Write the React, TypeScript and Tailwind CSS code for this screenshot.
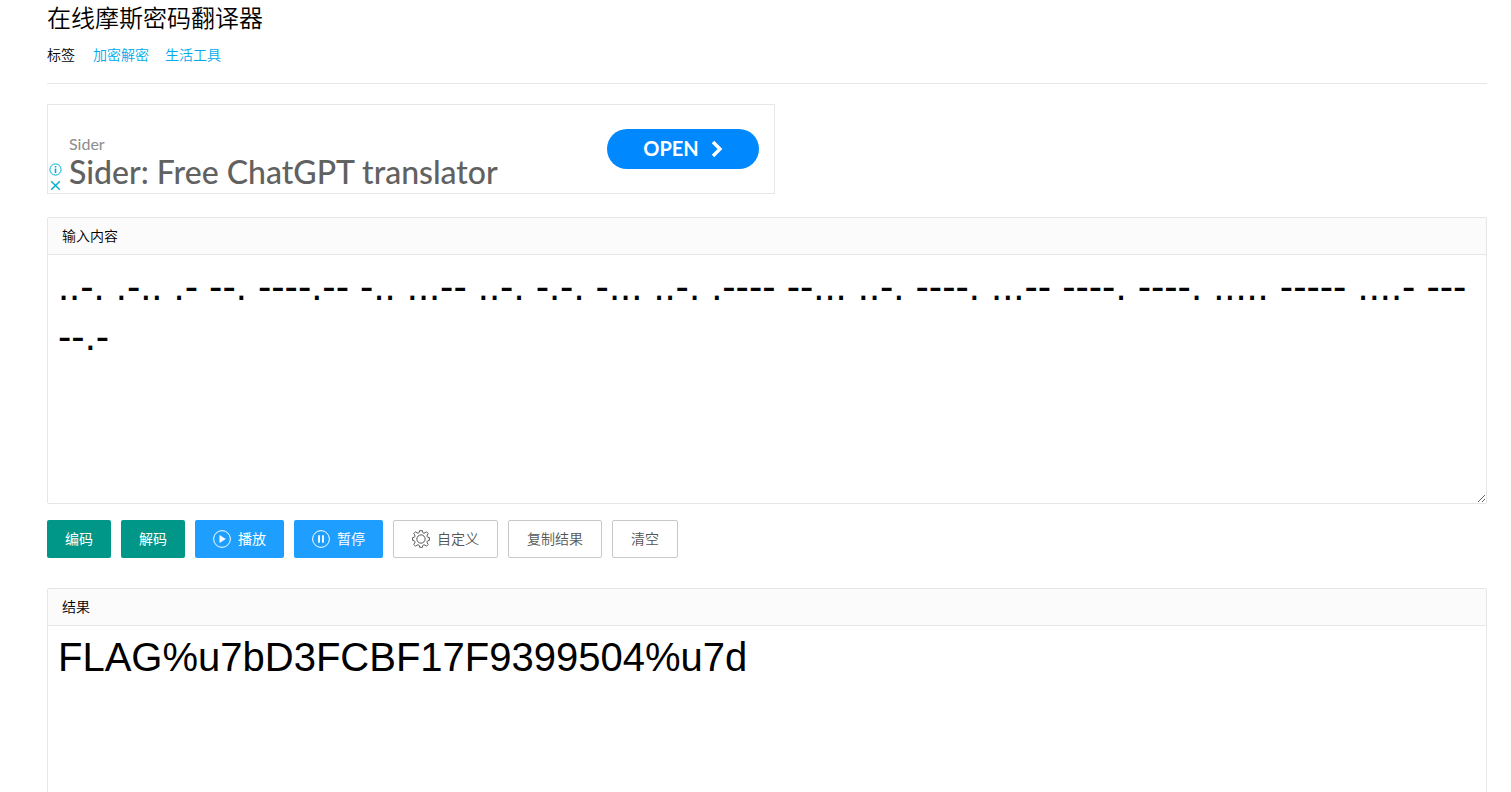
import { ReactNode, useState } from "react";

const MORSE =
  "..-. .-.. .- --. ----.-- -.. ...-- ..-. -.-. -... ..-. .---- --... ..-. ----. ...-- ----. ----. ..... ----- ....- -----.-";

const PlayIcon = () => (
  <svg viewBox="0 0 20 20" className="size-[18px]" fill="none">
    <circle cx="10" cy="10" r="9.3" stroke="currentColor" strokeWidth="1.1" />
    <path d="M7.2 5.6v8.8l7-4.4z" fill="currentColor" />
  </svg>
);

const PauseIcon = () => (
  <svg viewBox="0 0 20 20" className="size-[18px]" fill="none">
    <circle cx="10" cy="10" r="9.3" stroke="currentColor" strokeWidth="1.1" />
    <path d="M7.8 5.8v8.4M12.2 5.8v8.4" stroke="currentColor" strokeWidth="2" />
  </svg>
);

const GearIcon = () => (
  <svg
    viewBox="0 0 20 20"
    className="size-[18px]"
    fill="none"
    stroke="currentColor"
    strokeWidth="1.1"
    strokeLinejoin="round"
  >
    <circle cx="10" cy="10" r="4.6" />
    <path d="M8.4 .8h3.2l.3 1.9q1.2 1.4 2.6.5l1.6-1.2 2 2-1.2 1.6q-.8 1.4.6 2.5l1.8.3v3.2l-1.8.3q-1.4 1.1-.6 2.5l1.2 1.6-2 2-1.6-1.2q-1.4-.9-2.6.5l-.3 1.9H8.4l-.3-1.9q-1.2-1.4-2.6-.5L3.9 18l-2-2 1.2-1.6q.8-1.4-.6-2.5l-1.8-.3V8.4l1.8-.3q1.4-1.1.6-2.5L1.9 4l2-2 1.6 1.2q1.4.9 2.6-.5z" />
  </svg>
);

type ActionButtonProps = {
  variant: "primary" | "normal" | "outline";
  icon?: ReactNode;
  onClick?: () => void;
  children: ReactNode;
};

const variants = {
  primary: "bg-[#009688] font-normal text-white",
  normal: "bg-[#1e9fff] font-normal text-white",
  outline: "border border-[#c9c9c9] bg-white text-[#555]",
};

const ActionButton = ({
  variant,
  icon,
  onClick,
  children,
}: ActionButtonProps) => {
  return (
    <button
      type="button"
      onClick={onClick}
      className={`flex h-[38px] items-center gap-[7px] rounded-xs px-[18px] text-sm hover:opacity-80 ${variants[variant]}`}
    >
      {icon}
      {children}
    </button>
  );
};

const AdBanner = () => {
  return (
    <aside className="mt-5 flex h-[90px] w-full max-w-[728px] border border-[#e6e6e6] pr-[15px] pl-px">
      <div className="flex flex-col justify-end gap-[3px] pb-px text-[#00aecd]">
        <svg viewBox="0 0 13 13" className="size-[13px]" fill="none">
          <circle cx="6.5" cy="6.5" r="5.6" stroke="currentColor" />
          <path
            d="M6.5 3v1.5M6.5 5.5v4.5"
            stroke="currentColor"
            strokeWidth="1.6"
          />
        </svg>
        <svg viewBox="0 0 13 13" className="size-[13px]" fill="none">
          <path
            d="M2.2 2.2l8.6 8.6M10.8 2.2l-8.6 8.6"
            stroke="currentColor"
            strokeWidth="1.4"
          />
        </svg>
      </div>
      <div className="flex flex-1 flex-col justify-end pb-[3px] pl-[7px] font-['Lato',sans-serif]">
        <span className="text-base leading-5 font-normal text-[#8c8c8c]">
          Sider
        </span>
        <span className="text-[32px] leading-9 font-medium text-[#616161]">
          Sider: Free ChatGPT translator
        </span>
      </div>
      <a
        href="#open"
        className="mt-6 flex h-10 w-[152px] items-center justify-center gap-3 rounded-full bg-[#0088ff] pb-0.5 font-['Lato',sans-serif] text-xl font-bold text-white"
      >
        OPEN
        <svg viewBox="0 0 12 18" className="h-[18px] w-3" fill="none">
          <path d="M2 3l7 7-7 7" stroke="currentColor" strokeWidth="3.4" />
        </svg>
      </a>
    </aside>
  );
};

const App = () => {
  const [input, setInput] = useState(MORSE);
  const [result, setResult] = useState("FLAG%u7bD3FCBF17F9399504%u7d");

  const clear = () => {
    setInput("");
    setResult("");
  };

  return (
    <main className="bg-white pr-6 pl-[47px] font-['Liberation_Sans','Noto_Sans_CJK_SC',sans-serif] text-sm font-[350] text-black">
      <header className="border-b border-[#e6e6e6] pt-px pb-[17px]">
        <h1 className="text-2xl leading-9 font-[350]">在线摩斯密码翻译器</h1>
        <div className="mt-[7px] flex gap-4 leading-[22px]">
          <span className="mr-0.5">标签</span>
          <a href="#crypto" className="text-[#01aaed]">
            加密解密
          </a>
          <a href="#life" className="text-[#01aaed]">
            生活工具
          </a>
        </div>
      </header>

      <AdBanner />

      <section className="mt-[23px]">
        <label
          htmlFor="source"
          className="block rounded-t-xs border border-b-0 border-[#e6e6e6] bg-[#fbfbfb] px-3.5 leading-9"
        >
          输入内容
        </label>
        <textarea
          id="source"
          value={input}
          onChange={(e) => setInput(e.target.value)}
          className="block h-[250px] w-full resize-y rounded-b-xs border border-[#e6e6e6] px-2.5 py-1.5 text-[40px] leading-[50px] break-all outline-none"
        />
      </section>

      <div className="mt-4 flex flex-wrap gap-2.5">
        <ActionButton variant="primary">编码</ActionButton>
        <ActionButton variant="primary">解码</ActionButton>
        <ActionButton variant="normal" icon={<PlayIcon />}>
          播放
        </ActionButton>
        <ActionButton variant="normal" icon={<PauseIcon />}>
          暂停
        </ActionButton>
        <ActionButton variant="outline" icon={<GearIcon />}>
          自定义
        </ActionButton>
        <ActionButton
          variant="outline"
          onClick={() => navigator.clipboard.writeText(result)}
        >
          复制结果
        </ActionButton>
        <ActionButton variant="outline" onClick={clear}>
          清空
        </ActionButton>
      </div>

      <section className="mt-[30px]">
        <label
          htmlFor="result"
          className="block rounded-t-xs border border-b-0 border-[#e6e6e6] bg-[#fbfbfb] px-3.5 leading-9"
        >
          结果
        </label>
        <textarea
          id="result"
          value={result}
          onChange={(e) => setResult(e.target.value)}
          className="block h-[250px] w-full resize-y rounded-b-xs border border-[#e6e6e6] px-2.5 py-1.5 text-[40px] leading-[50px] break-all outline-none"
        />
      </section>
    </main>
  );
};

export default App;
